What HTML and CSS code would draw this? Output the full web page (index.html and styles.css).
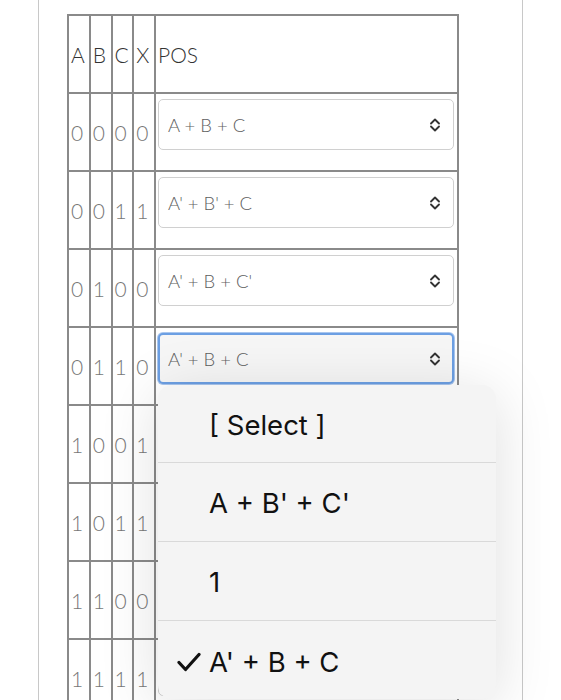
FILE: index.html
```html
<!DOCTYPE html>
<html>
<head>
<meta charset="utf-8">
<link rel="stylesheet" href="styles.css">
</head>
<body>
<div class="panel">
  <table class="truth">
    <colgroup>
      <col class="c-bit"><col class="c-bit"><col class="c-bit"><col class="c-bit"><col class="c-pos">
    </colgroup>
    <thead>
      <tr><th>A</th><th>B</th><th>C</th><th>X</th><th>POS</th></tr>
    </thead>
    <tbody>
      <tr><td>0</td><td>0</td><td>0</td><td>0</td><td class="pos"><div class="select"><span>A + B + C</span><svg class="chev" viewBox="0 0 10 14" width="10" height="14"><path d="M1 5.5 L5 1.5 L9 5.5 M1 8.5 L5 12.5 L9 8.5"/></svg></div></td></tr>
      <tr><td>0</td><td>0</td><td>1</td><td>1</td><td class="pos"><div class="select"><span>A' + B' + C</span><svg class="chev" viewBox="0 0 10 14" width="10" height="14"><path d="M1 5.5 L5 1.5 L9 5.5 M1 8.5 L5 12.5 L9 8.5"/></svg></div></td></tr>
      <tr><td>0</td><td>1</td><td>0</td><td>0</td><td class="pos"><div class="select"><span>A' + B + C'</span><svg class="chev" viewBox="0 0 10 14" width="10" height="14"><path d="M1 5.5 L5 1.5 L9 5.5 M1 8.5 L5 12.5 L9 8.5"/></svg></div></td></tr>
      <tr><td>0</td><td>1</td><td>1</td><td>0</td><td class="pos"><div class="select focused"><span>A' + B + C</span><svg class="chev" viewBox="0 0 10 14" width="10" height="14"><path d="M1 5.5 L5 1.5 L9 5.5 M1 8.5 L5 12.5 L9 8.5"/></svg></div></td></tr>
      <tr><td>1</td><td>0</td><td>0</td><td>1</td><td class="pos"><div class="select"><span></span></div></td></tr>
      <tr><td>1</td><td>0</td><td>1</td><td>1</td><td class="pos"><div class="select"><span></span></div></td></tr>
      <tr><td>1</td><td>1</td><td>0</td><td>0</td><td class="pos"><div class="select"><span></span></div></td></tr>
      <tr><td>1</td><td>1</td><td>1</td><td>1</td><td class="pos"><div class="select"><span></span></div></td></tr>
    </tbody>
  </table>
</div>

<div class="menu">
  <div class="item">[ Select ]</div>
  <div class="item">A + B' + C'</div>
  <div class="item">1</div>
  <div class="item checked"><svg class="check" viewBox="0 0 24 20" width="24" height="20"><path d="M2 10.5 L8.5 17.5 L22 2.5"/></svg>A' + B + C</div>
</div>
</body>
</html>
```

FILE: styles.css
```css
html, body {
  margin: 0;
  padding: 0;
  background: #ffffff;
  height: 700px;
  overflow: hidden;
}

body {
  font-family: Lato, "Liberation Sans", sans-serif;
  position: relative;
}

.panel {
  margin-left: 38px;
  width: 485px;
  height: 700px;
  border-left: 1px solid #c8c8c8;
  border-right: 1px solid #c8c8c8;
  padding: 14px 0 0 28px;
  box-sizing: border-box;
}

.truth {
  border-collapse: collapse;
  table-layout: fixed;
  width: 391px;
  border: 2px solid #8a8a8a;
}

.c-bit { width: 21.75px; }
.c-pos { width: 303px; }

.truth tr {
  height: 78px;
}

.truth th,
.truth td {
  border: 2px solid #8a8a8a;
  padding: 0 0 0 2px;
  font-weight: 300;
  font-size: 21px;
  color: #444;
  text-align: left;
  vertical-align: middle;
}

.truth th {
  color: #333;
}

.truth td {
  color: #777;
}

.truth td.pos {
  padding: 5px 3px 0 2px;
  vertical-align: top;
}

.select {
  height: 51px;
  box-sizing: border-box;
  border: 1px solid #d0d0d0;
  border-radius: 5px;
  display: flex;
  align-items: center;
  justify-content: space-between;
  padding: 0 13px 0 9px;
  font-size: 18.5px;
  font-weight: 300;
  color: #5e5e5e;
  background: #fff;
}

.select.focused {
  border: 2px solid #6c9fe3;
  box-shadow: 0 0 0 1px #a9c6ee;
  background: #f6f6f6;
  padding-left: 8px;
  padding-right: 12px;
}

.chev {
  fill: none;
  stroke: #333;
  stroke-width: 1.8;
  stroke-linecap: round;
  stroke-linejoin: round;
}

.menu {
  position: absolute;
  left: 158px;
  top: 385px;
  width: 338px;
  height: 314px;
  background: #f4f4f4;
  border-radius: 14px;
  box-shadow: 0 8px 60px rgba(0, 0, 0, 0.13);
  overflow: hidden;
  font-family: Inter, "Liberation Sans", sans-serif;
}

.item {
  height: 79px;
  box-sizing: border-box;
  border-bottom: 1px solid #d9d9d9;
  display: flex;
  align-items: center;
  padding-left: 51px;
  padding-top: 2px;
  font-size: 27.5px;
  color: #111;
}

.item:first-child {
  height: 78px;
}

.item:last-child {
  border-bottom: none;
}

.item.checked {
  padding-left: 19px;
}

.check {
  fill: none;
  stroke: #111;
  stroke-width: 3.2;
  stroke-linecap: round;
  stroke-linejoin: round;
  margin-right: 8px;
}
```
